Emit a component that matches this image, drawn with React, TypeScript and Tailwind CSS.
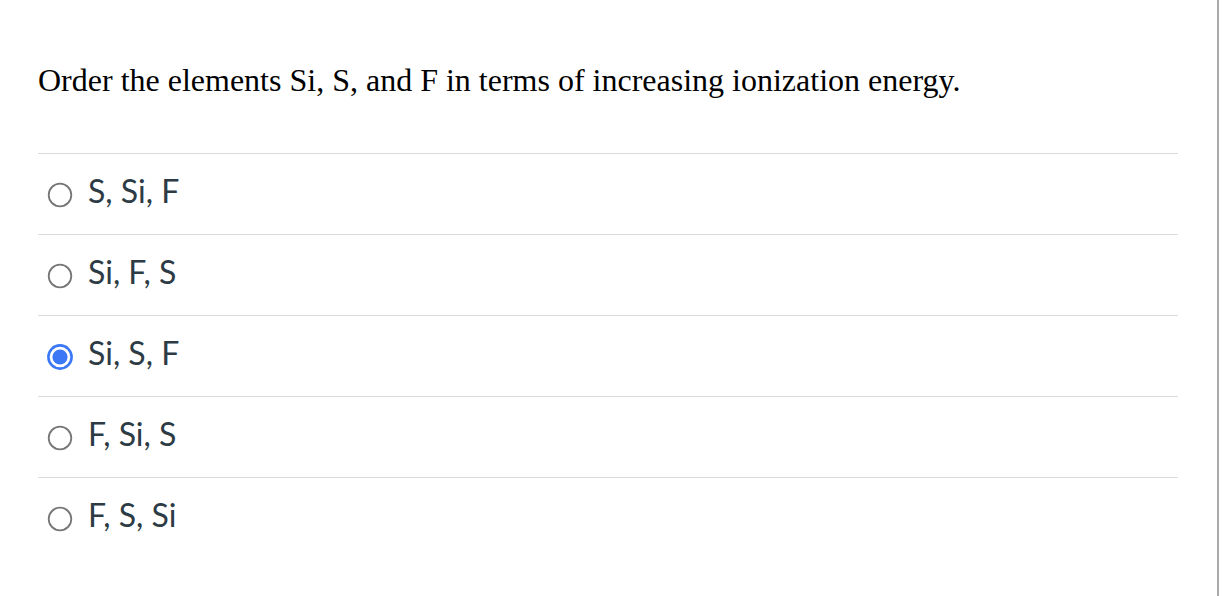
import React from "react";

const options = [
  { label: "S, Si, F", checked: false },
  { label: "Si, F, S", checked: false },
  { label: "Si, S, F", checked: true },
  { label: "F, Si, S", checked: false },
  { label: "F, S, Si", checked: false },
];

function Radio({ checked }: { checked: boolean }) {
  if (checked) {
    return (
      <svg width="26" height="26" viewBox="0 0 26 26" className="shrink-0 mt-[28px]">
        <circle cx="13" cy="13" r="11.6" fill="white" stroke="#3a78f6" strokeWidth="2.6" />
        <circle cx="13" cy="13" r="7.6" fill="#3a78f6" />
      </svg>
    );
  }
  return (
    <svg width="26" height="26" viewBox="0 0 26 26" className="shrink-0 mt-[28px]">
      <circle cx="13" cy="13" r="11.3" fill="white" stroke="#767676" strokeWidth="1.8" />
    </svg>
  );
}

export default function App() {
  return (
    <div className="w-[1222px] h-[596px] bg-white overflow-hidden">
      <div className="w-[1219px] h-full border-r-2 border-[#a9a9a9] pl-[38px] pr-[39px]">
        <div
          className="pt-[60px] pb-[53px] text-[32px] leading-[40px] text-black whitespace-nowrap"
          style={{ fontFamily: '"Liberation Serif", "Times New Roman", serif' }}
        >
          Order the elements Si, S, and F in terms of increasing ionization energy.
        </div>
        <div style={{ fontFamily: "Lato, sans-serif" }}>
          {options.map((o) => (
            <div
              key={o.label}
              className="h-[81px] border-t-[1.5px] border-[#dadada] flex items-start pl-[9px] gap-[15px]"
            >
              <Radio checked={o.checked} />
              <span className="mt-[21px] text-[32px] text-[#2d3b45] leading-[32px]">{o.label}</span>
            </div>
          ))}
        </div>
      </div>
    </div>
  );
}
